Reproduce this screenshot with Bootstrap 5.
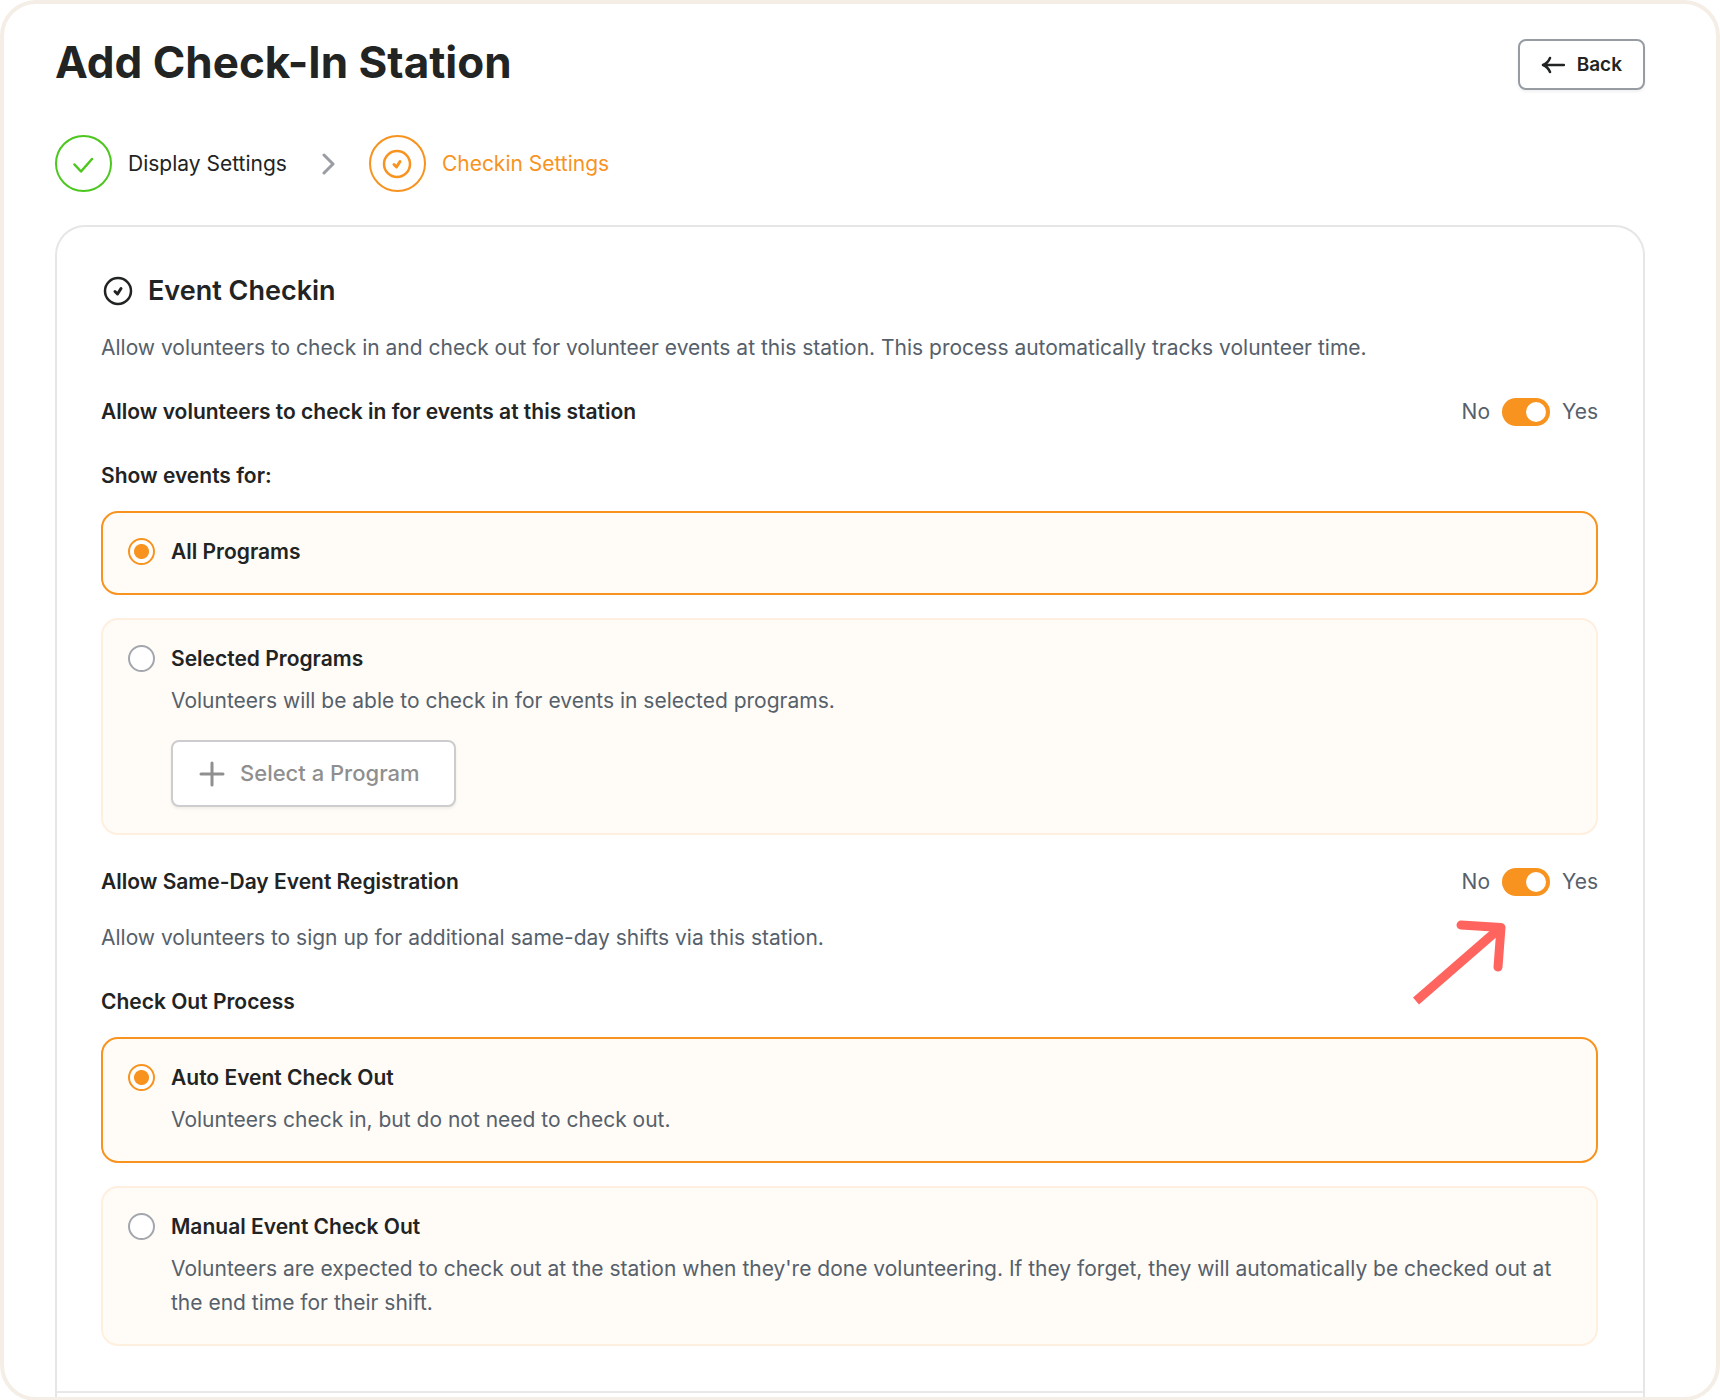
<!DOCTYPE html>
<html lang="en">
<head>
<meta charset="utf-8">
<meta name="viewport" content="width=device-width, initial-scale=1">
<title>Add Check-In Station</title>
<link href="https://cdn.jsdelivr.net/npm/bootstrap@5.3.0/dist/css/bootstrap.min.css" rel="stylesheet">
<style>
:root { --ink: #222323; --slate: #56606b; --orange: #f7931e; --green: #4cc71e; }
body { font-family: Inter, Lato, sans-serif; font-size: 21px; line-height: 34px; color: var(--ink); background: #fff; }
.station-frame { min-height: 100vh; border: 4px solid #f5eee6; border-radius: 36px; padding: 35px 71px 0 51px; overflow: hidden; }
.page-title { font-size: 44px; line-height: 46px; font-weight: 700; }
.btn-plain { --bs-btn-border-color: #979ca3; --bs-btn-border-width: 2px; --bs-btn-border-radius: 8px; --bs-btn-bg: #fff; --bs-btn-color: var(--ink); --bs-btn-disabled-bg: #fff; --bs-btn-disabled-color: #8f8f8f; --bs-btn-disabled-border-color: #cdcdcf; --bs-btn-disabled-opacity: 1; --bs-btn-font-weight: 500; box-shadow: 0 2px 3px rgba(0,0,0,.06); }
.btn-back { --bs-btn-font-weight: 600; --bs-btn-font-size: 19px; --bs-btn-line-height: 29px; --bs-btn-padding-x: 21px; --bs-btn-padding-y: 9px; gap: 12px; }
.btn-program { --bs-btn-font-size: 22px; --bs-btn-line-height: 33px; --bs-btn-padding-y: 15px; padding-left: 25px; padding-right: 34px; gap: 14px; margin-top: 22px; margin-bottom: 2px; }
.steps { margin-top: 45px; gap: 33px; }
.step-link { gap: 16px; color: var(--ink); text-decoration: none; }
.step-link.current { color: var(--orange); }
.step-ring { width: 57px; height: 57px; border: 2px solid var(--green); border-radius: 50%; color: var(--green); }
.current .step-ring { border-color: var(--orange); color: var(--orange); }
.settings-panel { margin-top: 33px; border: 2px solid #e6e6e7; border-bottom: 0; border-radius: 30px 30px 0 0; }
.panel-part { padding: 46px 45px 45px 44px; border-bottom: 2px solid #e9e9e9; }
.panel-end { height: 4px; }
.part-title { font-size: 27px; line-height: 36px; font-weight: 600; gap: 15px; }
.hint { color: var(--slate); }
.strong-line { font-weight: 600; }
.gap-top { margin-top: 30px; }
.gap-top-sm { margin-top: 22px; }
.switch-set { gap: 12px; color: var(--slate); }
.form-check-input.toggle-input { width: 48px; height: 28px; margin: 0; border: 0; border-radius: 14px; background: #c4c8cc; position: relative; float: none; }
.toggle-input::after { content: ""; position: absolute; top: 4px; left: 4px; width: 20px; height: 20px; border-radius: 50%; background: #fff; }
.form-check-input.toggle-input:checked { background: var(--orange); }
.toggle-input:checked::after { left: 24px; }
.options { margin-top: 18px; gap: 23px; }
.option-box { border: 2px solid #ffefdf; border-radius: 17px; background: #fffcf7; padding: 22px 25px 24px; gap: 16px; }
.option-box.chosen { border-color: var(--orange); }
.form-check-input.pick { width: 27px; height: 27px; margin: 3px 0 0; border: 2px solid #a3a7ad; background: #fff; flex: none; }
.form-check-input.pick:checked { border-color: var(--orange); background: radial-gradient(circle, var(--orange) 7px, #fff 8px); }
.option-text { margin-top: 8px; }
.pointer-arrow { position: absolute; top: 53px; right: 92px; pointer-events: none; }
</style>
</head>
<body>
<main class="station-frame">
  <header class="d-flex justify-content-between align-items-start">
    <h1 class="page-title mb-0">Add Check-In Station</h1>
    <button type="button" class="btn btn-plain btn-back d-flex align-items-center">
      <svg width="24" height="18" viewBox="0 0 24 18" fill="none" stroke="currentColor" stroke-width="2.500" stroke-linecap="round" stroke-linejoin="round" aria-hidden="true"><path d="M23 9H2M9 2Q7 7 2 9Q7 11 9 16"/></svg>
      Back
    </button>
  </header>

  <nav class="steps d-flex align-items-center" aria-label="Steps">
    <a href="#display" class="step-link d-flex align-items-center">
      <span class="step-ring d-flex align-items-center justify-content-center">
        <svg width="22" height="20" viewBox="0 0 22 20" fill="none" stroke="currentColor" stroke-width="2.500" stroke-linecap="round" stroke-linejoin="round" aria-hidden="true"><path d="M1.500 10.500l6.500 7L19 5"/></svg>
      </span>
      Display Settings
    </a>
    <svg width="16" height="22" viewBox="0 0 16 22" fill="none" stroke="#999ca2" stroke-width="3" stroke-linecap="round" stroke-linejoin="round" aria-hidden="true"><path d="M4 2l9 9-9 9"/></svg>
    <a href="#checkin" class="step-link current d-flex align-items-center" aria-current="step">
      <span class="step-ring d-flex align-items-center justify-content-center">
        <svg width="30" height="30" viewBox="0 0 30 30" fill="none" stroke="currentColor" stroke-width="2.500" stroke-linecap="round" stroke-linejoin="round" aria-hidden="true"><circle cx="15" cy="15" r="13"/><path stroke-width="3" d="M12 15.500l2.500 2.500 3.500-5.500"/></svg>
      </span>
      Checkin Settings
    </a>
  </nav>

  <section class="settings-panel" id="checkin">
    <div class="panel-part">
      <h2 class="part-title d-flex align-items-center mb-0">
        <svg width="32" height="30" viewBox="-2 0 32 30" fill="none" stroke="currentColor" stroke-width="2.500" stroke-linecap="round" stroke-linejoin="round" aria-hidden="true"><circle cx="15" cy="15" r="13"/><path stroke-width="3" d="M12 15.500l2.500 2.500 3.500-5.500"/></svg>
        Event Checkin
      </h2>
      <p class="hint gap-top-sm mb-0">Allow volunteers to check in and check out for volunteer events at this station. This process automatically tracks volunteer time.</p>

      <div class="gap-top d-flex justify-content-between align-items-center">
        <label class="strong-line" for="allowCheckin">Allow volunteers to check in for events at this station</label>
        <div class="form-switch switch-set d-flex align-items-center p-0 m-0">
          <span>No</span>
          <input class="form-check-input toggle-input" type="checkbox" role="switch" id="allowCheckin" checked>
          <span>Yes</span>
        </div>
      </div>

      <div class="gap-top strong-line" id="showFor">Show events for:</div>
      <div class="options d-flex flex-column" role="radiogroup" aria-labelledby="showFor">
        <div class="option-box chosen d-flex">
          <input class="form-check-input pick" type="radio" name="programs" id="allPrograms" checked>
          <label class="strong-line" for="allPrograms">All Programs</label>
        </div>
        <div class="option-box d-flex">
          <input class="form-check-input pick" type="radio" name="programs" id="selectedPrograms">
          <div>
            <label class="strong-line d-block" for="selectedPrograms">Selected Programs</label>
            <p class="hint option-text mb-0">Volunteers will be able to check in for events in selected programs.</p>
            <button type="button" class="btn btn-plain btn-program d-flex align-items-center" disabled>
              <svg width="28" height="28" viewBox="0 0 28 28" fill="none" stroke="currentColor" stroke-width="3" stroke-linecap="round" aria-hidden="true"><path d="M14 3v22M3 14h22"/></svg>
              Select a Program
            </button>
          </div>
        </div>
      </div>

      <div class="gap-top d-flex justify-content-between align-items-center position-relative">
        <label class="strong-line" for="sameDay">Allow Same-Day Event Registration</label>
        <div class="form-switch switch-set d-flex align-items-center p-0 m-0">
          <span>No</span>
          <input class="form-check-input toggle-input" type="checkbox" role="switch" id="sameDay" checked>
          <span>Yes</span>
        </div>
        <svg class="pointer-arrow" width="94" height="88" viewBox="0 0 94 88" fill="none" stroke="#ff645e" stroke-width="9" stroke-linejoin="round" aria-hidden="true"><path d="M4 83L88 10"/><path d="M49 7L89 9.500L86 49" stroke-linecap="round"/></svg>
      </div>
      <p class="hint gap-top-sm mb-0">Allow volunteers to sign up for additional same-day shifts via this station.</p>

      <div class="gap-top strong-line" id="checkOut">Check Out Process</div>
      <div class="options d-flex flex-column" role="radiogroup" aria-labelledby="checkOut">
        <div class="option-box chosen d-flex">
          <input class="form-check-input pick" type="radio" name="checkout" id="autoOut" checked>
          <div>
            <label class="strong-line d-block" for="autoOut">Auto Event Check Out</label>
            <p class="hint option-text mb-0">Volunteers check in, but do not need to check out.</p>
          </div>
        </div>
        <div class="option-box d-flex">
          <input class="form-check-input pick" type="radio" name="checkout" id="manualOut">
          <div>
            <label class="strong-line d-block" for="manualOut">Manual Event Check Out</label>
            <p class="hint option-text mb-0">Volunteers are expected to check out at the station when they're done volunteering. If they forget, they will automatically be checked out at the end time for their shift.</p>
          </div>
        </div>
      </div>
    </div>
    <div class="panel-end"></div>
  </section>
</main>
<script src="https://cdn.jsdelivr.net/npm/bootstrap@5.3.0/dist/js/bootstrap.bundle.min.js"></script>
</body>
</html>
